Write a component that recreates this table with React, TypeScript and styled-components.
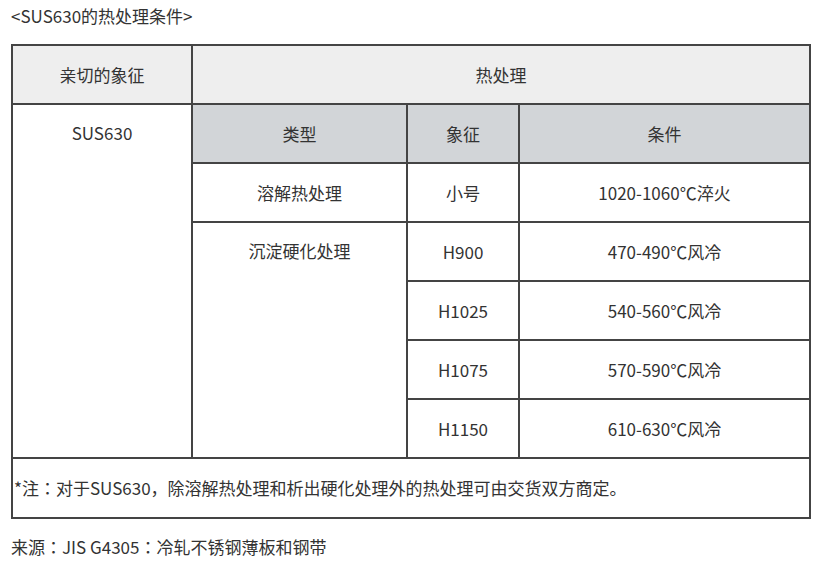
import React from 'react'
import styled, { createGlobalStyle } from 'styled-components'

const GlobalStyle = createGlobalStyle`
  body {
    margin: 0;
    background: #fff;
    font-family: "Noto Sans CJK JP", "Noto Sans CJK SC", "Noto Sans", sans-serif;
    color: #333;
  }
`

const rows = [
  { mark: 'H900', cond: '470-490℃风冷' },
  { mark: 'H1025', cond: '540-560℃风冷' },
  { mark: 'H1075', cond: '570-590℃风冷' },
  { mark: 'H1150', cond: '610-630℃风冷' },
]

const App = () => {
  return (
    <Page>
      <GlobalStyle />
      <Title>&lt;SUS630的热处理条件&gt;</Title>
      <Table>
        <colgroup>
          <col style={{ width: 180 }} />
          <col style={{ width: 215 }} />
          <col style={{ width: 112 }} />
          <col />
        </colgroup>
        <tbody>
          <tr>
            <Head>亲切的象征</Head>
            <Head colSpan={3}>热处理</Head>
          </tr>
          <tr>
            <Cell rowSpan={6} top>
              SUS630
            </Cell>
            <SubHead>类型</SubHead>
            <SubHead>象征</SubHead>
            <SubHead>条件</SubHead>
          </tr>
          <tr>
            <Cell>溶解热处理</Cell>
            <Cell>小号</Cell>
            <Cell>1020-1060℃淬火</Cell>
          </tr>
          {rows.map((r, i) => (
            <tr key={r.mark}>
              {i === 0 && (
                <Cell rowSpan={4} top>
                  沉淀硬化处理
                </Cell>
              )}
              <Cell>{r.mark}</Cell>
              <Cell>{r.cond}</Cell>
            </tr>
          ))}
          <tr>
            <Note colSpan={4}>
              *注：对于SUS630，除溶解热处理和析出硬化处理外的热处理可由交货双方商定。
            </Note>
          </tr>
        </tbody>
      </Table>
      <Source>来源：JIS G4305：冷轧不锈钢薄板和钢带</Source>
    </Page>
  )
}

export default App

const Page = styled.div`
  width: 800px;
  padding: 4px 0 0 11px;
`

const Title = styled.div`
  font-size: 17px;
  line-height: 24px;
  margin-bottom: 16px;
`

const Table = styled.table`
  width: 800px;
  border-collapse: collapse;
  table-layout: fixed;
  font-size: 17px;
`

const Cell = styled.td<{ top?: boolean }>`
  border: 2px solid #444;
  height: 59px;
  padding: 0 6px;
  text-align: center;
  vertical-align: ${p => (p.top ? 'top' : 'middle')};
  padding-top: ${p => (p.top ? '16px' : '0')};
  line-height: 24px;
  box-sizing: border-box;
`

const Head = styled(Cell)`
  background: #eeeeee;
`

const SubHead = styled(Cell)`
  background: #d2d5d8;
`

const Note = styled.td`
  border: 2px solid #444;
  height: 60px;
  padding: 0 1px;
  text-align: left;
  line-height: 24px;
  box-sizing: border-box;
`

const Source = styled.div`
  font-size: 17px;
  line-height: 24px;
  margin-top: 16px;
`
